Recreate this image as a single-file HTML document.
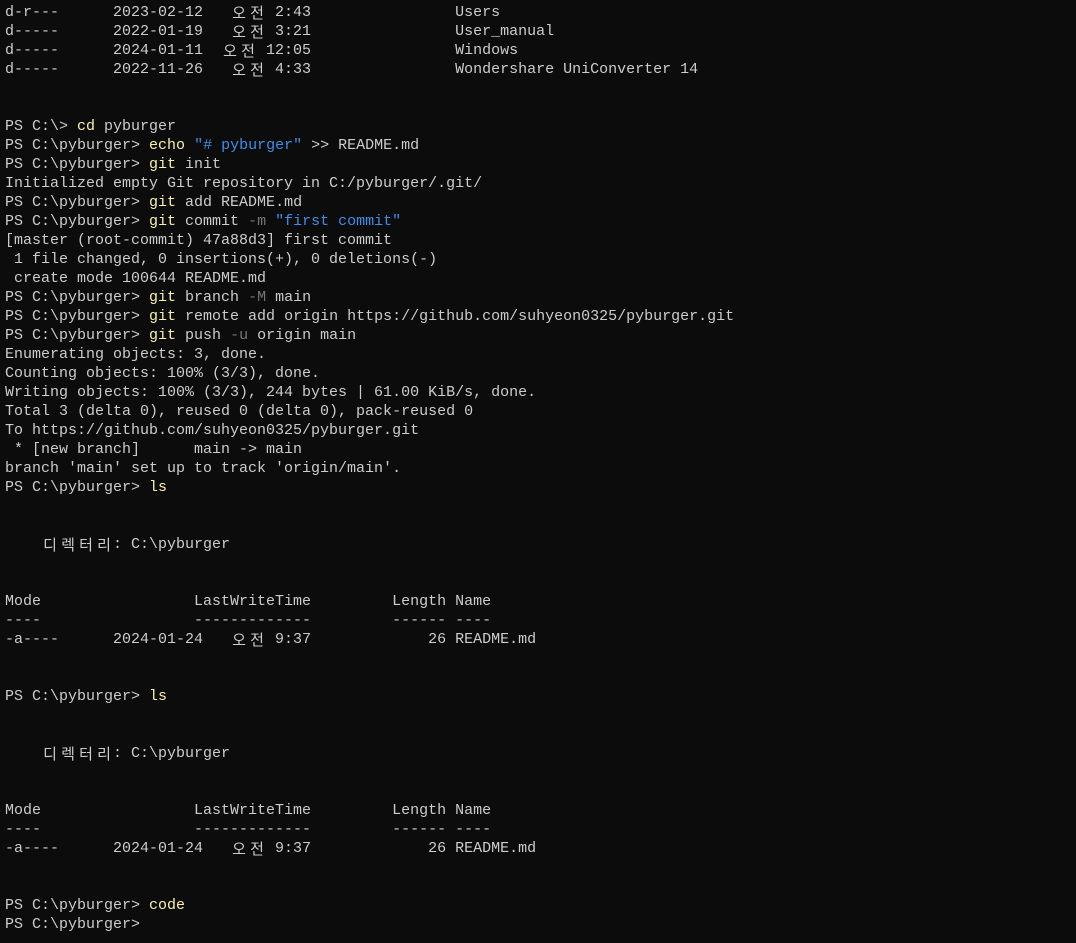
<!DOCTYPE html>
<html><head><meta charset="utf-8"><style>
html,body{margin:0;padding:0;background:#0c0c0c;width:1076px;height:943px;overflow:hidden}
#t{position:absolute;left:5px;top:3px;font-family:"Liberation Mono","Noto Sans CJK KR",monospace;font-size:15px;line-height:19px;color:#cccccc;white-space:pre}
.y{color:#f9f1a5}.b{color:#3b8eea}.g{color:#767676}
.k{display:inline-block;width:18px;text-align:center;font-family:"Noto Sans CJK KR","NanumGothic",sans-serif;font-size:15px;line-height:19px;vertical-align:top}
</style></head><body><div id="t">d-r---      2023-02-12   <span class="k">오</span><span class="k">전</span> 2:43                Users
d-----      2022-01-19   <span class="k">오</span><span class="k">전</span> 3:21                User_manual
d-----      2024-01-11  <span class="k">오</span><span class="k">전</span> 12:05                Windows
d-----      2022-11-26   <span class="k">오</span><span class="k">전</span> 4:33                Wondershare UniConverter 14


PS C:\&gt; <span class="y">cd</span> pyburger
PS C:\pyburger&gt; <span class="y">echo</span> <span class="b">"# pyburger"</span> &gt;&gt; README.md
PS C:\pyburger&gt; <span class="y">git</span> init
Initialized empty Git repository in C:/pyburger/.git/
PS C:\pyburger&gt; <span class="y">git</span> add README.md
PS C:\pyburger&gt; <span class="y">git</span> commit <span class="g">-m</span> <span class="b">"first commit"</span>
[master (root-commit) 47a88d3] first commit
 1 file changed, 0 insertions(+), 0 deletions(-)
 create mode 100644 README.md
PS C:\pyburger&gt; <span class="y">git</span> branch <span class="g">-M</span> main
PS C:\pyburger&gt; <span class="y">git</span> remote add origin https://github.com/suhyeon0325/pyburger.git
PS C:\pyburger&gt; <span class="y">git</span> push <span class="g">-u</span> origin main
Enumerating objects: 3, done.
Counting objects: 100% (3/3), done.
Writing objects: 100% (3/3), 244 bytes | 61.00 KiB/s, done.
Total 3 (delta 0), reused 0 (delta 0), pack-reused 0
To https://github.com/suhyeon0325/pyburger.git
 * [new branch]      main -&gt; main
branch 'main' set up to track 'origin/main'.
PS C:\pyburger&gt; <span class="y">ls</span>


    <span class="k">디</span><span class="k">렉</span><span class="k">터</span><span class="k">리</span>: C:\pyburger


Mode                 LastWriteTime         Length Name
----                 -------------         ------ ----
-a----      2024-01-24   <span class="k">오</span><span class="k">전</span> 9:37             26 README.md


PS C:\pyburger&gt; <span class="y">ls</span>


    <span class="k">디</span><span class="k">렉</span><span class="k">터</span><span class="k">리</span>: C:\pyburger


Mode                 LastWriteTime         Length Name
----                 -------------         ------ ----
-a----      2024-01-24   <span class="k">오</span><span class="k">전</span> 9:37             26 README.md


PS C:\pyburger&gt; <span class="y">code</span>
PS C:\pyburger&gt;</div></body></html>
